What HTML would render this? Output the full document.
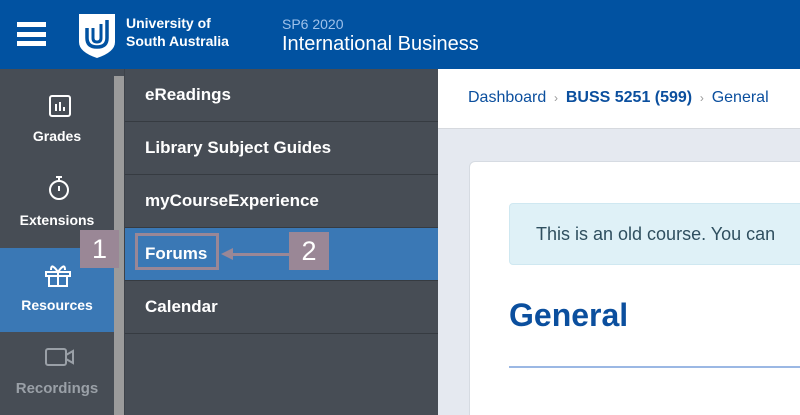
<!DOCTYPE html>
<html><head><style>
*{margin:0;padding:0;box-sizing:border-box}
html,body{width:800px;height:415px;overflow:hidden}
body{position:relative;font-family:"Liberation Sans",sans-serif;background:#e5e9f0}
.hdr{position:absolute;left:0;top:0;width:800px;height:69px;background:#0152a1}
.rail{position:absolute;left:0;top:69px;width:114px;height:346px;background:#474d55}
.sb{position:absolute;left:114px;top:76px;width:10px;height:339px;background:#9b9b9b}
.sbt{position:absolute;left:114px;top:69px;width:10px;height:7px;background:#474d55}
.panel{position:absolute;left:124px;top:69px;width:314px;height:346px;background:#474d55;border-left:1px solid #3d4249}
.row{height:53px;border-bottom:1px solid #363b41;color:#fff;font-size:17px;font-weight:bold;padding-left:20px;line-height:52px}
.ri{position:absolute;left:0;width:114px;text-align:center;color:#fff;font-size:14px;font-weight:bold}
.crumb{position:absolute;left:438px;top:69px;width:362px;height:60px;background:#fff;border-bottom:1px solid #d6d9de;font-size:16px;color:#0b4f9e;line-height:58px;padding-left:30px;white-space:nowrap}
.card{position:absolute;left:469px;top:161px;width:340px;height:260px;background:#fff;border:1px solid #d6dbe2;border-radius:6px}
.box{position:absolute;background:#9a8796;color:#fff;font-size:27px;text-align:center;line-height:38px}
</style></head><body>
<div class="hdr">
 <div style="position:absolute;left:17px;top:22px;width:29px;height:5px;background:#fff"></div>
 <div style="position:absolute;left:17px;top:32px;width:29px;height:5px;background:#fff"></div>
 <div style="position:absolute;left:17px;top:41px;width:29px;height:5px;background:#fff"></div>
 <svg style="position:absolute;left:79px;top:14px" width="36" height="44" viewBox="0 0 36 44"><path d="M0 0H36V28Q36 38 18 44Q0 38 0 28Z" fill="#fff"/><path d="M8 14V24Q8 33 18 33Q28 33 28 24V6" fill="none" stroke="#0152a1" stroke-width="3.5"/><path d="M14 14V24Q14 28 18 28Q22 28 22 24V10" fill="none" stroke="#0152a1" stroke-width="3"/></svg>
 <div style="position:absolute;left:126px;top:14px;color:#fff;font-size:14px;font-weight:bold;line-height:18px">University of<br>South Australia</div>
 <div style="position:absolute;left:282px;top:16px;color:#9fc1ea;font-size:14px">SP6 2020</div>
 <div style="position:absolute;left:282px;top:33px;color:#fff;font-size:20px">International Business</div>
</div>
<div class="rail">
 <svg style="position:absolute;left:48px;top:25px" width="24" height="24"><rect x="2" y="2" width="20" height="20" rx="2" fill="none" stroke="#fff" stroke-width="2"/><path d="M8 10v7M12 8v9M16 13v4" stroke="#fff" stroke-width="2"/></svg>
 <div class="ri" style="top:59px">Grades</div>
 <svg style="position:absolute;left:47px;top:105px" width="24" height="28"><circle cx="12" cy="16" r="9" fill="none" stroke="#fff" stroke-width="2"/><path d="M9 3h6M12 3v4M12 12v5" stroke="#fff" stroke-width="2"/></svg>
 <div class="ri" style="top:143px">Extensions</div>
 <div style="position:absolute;left:0;top:179px;width:114px;height:84px;background:#3a78b5"></div>
 <svg style="position:absolute;left:43px;top:193px" width="30" height="26"><path d="M3 10h24v4H3zM6 14v10h18V14M15 10v14M15 10Q8 0 8 8M15 10Q22 0 22 8" fill="none" stroke="#fff" stroke-width="2"/></svg>
 <div class="ri" style="top:228px">Resources</div>
 <svg style="position:absolute;left:44px;top:277px" width="32" height="22"><rect x="2" y="3" width="20" height="16" rx="2" fill="none" stroke="#9aa0a7" stroke-width="2"/><path d="M22 9l7-4v12l-7-4" fill="none" stroke="#9aa0a7" stroke-width="2"/></svg>
 <div class="ri" style="top:311px;color:#9aa0a7;font-size:15px">Recordings</div>
</div>
<div class="sbt"></div><div class="sb"></div>
<div class="panel">
 <div class="row">eReadings</div>
 <div class="row">Library Subject Guides</div>
 <div class="row">myCourseExperience</div>
 <div class="row" style="background:#3a78b5">Forums</div>
 <div class="row">Calendar</div>
</div>
<div class="crumb">Dashboard <span style="color:#999;font-size:12px">&nbsp;›&nbsp;</span> <b>BUSS 5251 (599)</b> <span style="color:#999;font-size:12px">&nbsp;›&nbsp;</span> General</div>
<div class="card">
 <div style="position:absolute;left:39px;top:41px;width:300px;height:62px;background:#dff1f7;border:1px solid #cfe8f1;border-radius:4px;color:#2f4f5f;font-size:18px;line-height:60px;padding-left:26px;white-space:nowrap;overflow:hidden">This is an old course. You can</div>
 <div style="position:absolute;left:39px;top:135px;color:#0b4f9e;font-size:32px;font-weight:bold">General</div>
 <div style="position:absolute;left:39px;top:204px;width:300px;height:2px;background:#9bb8e4"></div>
</div>
<div style="position:absolute;left:135px;top:233px;width:84px;height:37px;border:3px solid #9a8796"></div>
<div style="position:absolute;left:232px;top:253px;width:58px;height:3px;background:#9a8796"></div>
<div style="position:absolute;left:221px;top:248px;width:0;height:0;border-top:6px solid transparent;border-bottom:6px solid transparent;border-right:12px solid #9a8796"></div>
<div class="box" style="left:80px;top:230px;width:39px;height:38px">1</div>
<div class="box" style="left:289px;top:232px;width:40px;height:38px">2</div>
</body></html>
